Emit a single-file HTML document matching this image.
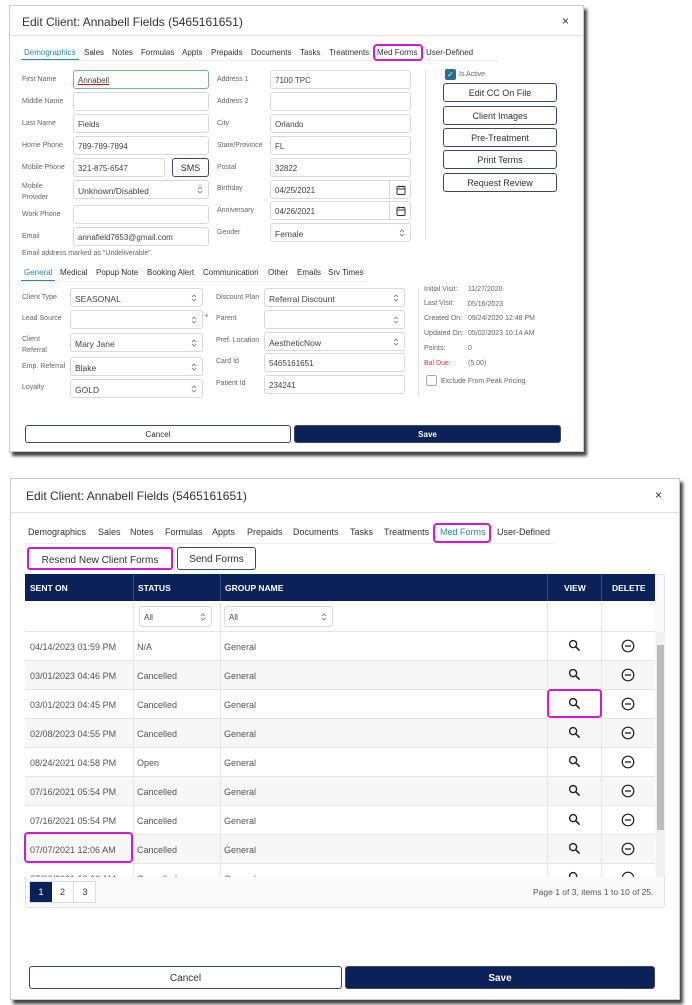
<!DOCTYPE html>
<html><head><meta charset="utf-8"><style>
*{box-sizing:border-box;margin:0;padding:0}
body{width:692px;height:1005px;background:#fff;position:relative;overflow:hidden;font-family:"Liberation Sans",sans-serif;color:#333}
.a{position:absolute;white-space:nowrap}
.m{position:absolute;background:#fff;border:1px solid #ccc;box-shadow:3px 4px 3px #444}
.lbl{position:absolute;font-size:7px;color:#666}
.inp{position:absolute;border:1px solid #d9d9d9;border-radius:3px;height:19px;font-size:8px;padding:5px 4px;color:#444;background:#fff}
.sel:after{content:"";position:absolute;right:6px;top:5px;width:4px;height:7px;background:linear-gradient(#fff,#fff);border:none}
.btn{position:absolute;border:1px solid #3c4a6a;border-radius:3px;font-size:9px;text-align:center;color:#333;background:#fff}
.mg{position:absolute;border:2px solid #d21ad0;border-radius:4px}
.t1{position:absolute;top:48px;font-size:8px;color:#333;white-space:nowrap}
.t2{position:absolute;top:268px;font-size:8px;color:#333;white-space:nowrap}
.t3{position:absolute;top:527px;font-size:9px;color:#333;white-space:nowrap}
.row{position:absolute;left:25px;width:630px;height:29px;border-bottom:1px solid #e6e6e6;font-size:9px;color:#555}
.row span{position:absolute;top:10px}
.cell{position:absolute;top:0;height:100%;border-left:1px solid #e6e6e6}
.ic{position:absolute;top:7px}
.ud{position:absolute;right:5px;top:4px}
</style></head><body>
<svg width="0" height="0" style="position:absolute"><defs>
<symbol id="q" viewBox="0 0 14 14"><circle cx="5.5" cy="5.5" r="3.8" fill="none" stroke="#222" stroke-width="1.5"/><path d="M8.3 8.3L12 12" stroke="#222" stroke-width="1.7" stroke-linecap="round"/></symbol>
<symbol id="d" viewBox="0 0 14 14"><circle cx="7" cy="7" r="5.8" fill="none" stroke="#222" stroke-width="1.2"/><path d="M4 7h6" stroke="#222" stroke-width="1.3"/></symbol>
<symbol id="ud" viewBox="0 0 6 10"><path d="M1 4L3 2L5 4M1 6L3 8L5 6" fill="none" stroke="#888" stroke-width="0.9"/></symbol>
<symbol id="cal" viewBox="0 0 12 12"><rect x="2" y="2.5" width="8" height="8" rx="1" fill="none" stroke="#333" stroke-width="1"/><path d="M2 5h8M4 1.5v2M8 1.5v2" stroke="#333" stroke-width="1"/></symbol>
</defs></svg>

<!-- Modal 1 -->
<div class="m" style="left:9px;top:5px;width:575px;height:447px"></div>
<div class="a" style="left:22px;top:15px;font-size:12px;color:#333">Edit Client: Annabell Fields (5465161651)</div>
<div class="a" style="left:562px;top:14px;font-size:12px">×</div>
<div class="a" style="left:10px;top:35px;width:573px;border-top:1px solid #e2e2e2"></div>
<span class="t1" style="left:24px;color:#2a8ca8">Demographics</span><span class="t1" style="left:84px">Sales</span><span class="t1" style="left:112px">Notes</span><span class="t1" style="left:141px">Formulas</span><span class="t1" style="left:182px">Appts</span><span class="t1" style="left:211px">Prepaids</span><span class="t1" style="left:251px">Documents</span><span class="t1" style="left:300px">Tasks</span><span class="t1" style="left:329px">Treatments</span><span class="t1" style="left:377px">Med Forms</span><span class="t1" style="left:426px">User-Defined</span>
<div class="a" style="left:21px;top:60px;width:478px;border-top:1px solid #eee"></div>
<div class="a" style="left:21px;top:59px;width:58px;border-top:1px solid #2a8ca8"></div>
<div class="mg" style="left:373px;top:44px;width:50px;height:17px"></div>

<div class="lbl" style="left:22px;top:76px">First Name</div><div class="inp" style="left:73px;top:70px;width:136px;border-color:#7aa8c0"><u style="text-decoration-color:red">Annabell</u></div>
<div class="lbl" style="left:22px;top:98px">Middle Name</div><div class="inp" style="left:73px;top:92px;width:136px"></div>
<div class="lbl" style="left:22px;top:120px">Last Name</div><div class="inp" style="left:73px;top:114px;width:136px">Fields</div>
<div class="lbl" style="left:22px;top:142px">Home Phone</div><div class="inp" style="left:73px;top:136px;width:136px">789-789-7894</div>
<div class="lbl" style="left:22px;top:164px">Mobile Phone</div><div class="inp" style="left:73px;top:158px;width:92px">321-875-6547</div>
<div class="btn" style="left:172px;top:158px;width:37px;height:19px;padding-top:4px">SMS</div>
<div class="lbl" style="left:22px;top:181px;line-height:11px">Mobile<br>Provider</div><div class="inp" style="left:73px;top:180px;width:136px;font-size:8.5px">Unknown/Disabled<svg class="ud" width="6" height="10"><use href="#ud"/></svg></div>
<div class="lbl" style="left:22px;top:211px">Work Phone</div><div class="inp" style="left:73px;top:205px;width:136px"></div>
<div class="lbl" style="left:22px;top:233px">Email</div><div class="inp" style="left:73px;top:227px;width:136px">annafield7653@gmail.com</div>
<div class="lbl" style="left:22px;top:250px">Email address marked as "Undeliverable".</div>

<div class="lbl" style="left:217px;top:76px">Address 1</div><div class="inp" style="left:270px;top:70px;width:141px">7100 TPC</div>
<div class="lbl" style="left:217px;top:98px">Address 2</div><div class="inp" style="left:270px;top:92px;width:141px"></div>
<div class="lbl" style="left:217px;top:120px">City</div><div class="inp" style="left:270px;top:114px;width:141px">Orlando</div>
<div class="lbl" style="left:217px;top:142px">State/Province</div><div class="inp" style="left:270px;top:136px;width:141px">FL</div>
<div class="lbl" style="left:217px;top:164px">Postal</div><div class="inp" style="left:270px;top:158px;width:141px">32822</div>
<div class="lbl" style="left:217px;top:185px">Birthday</div><div class="inp" style="left:270px;top:180px;width:141px">04/25/2021</div><div class="a" style="left:389px;top:180px;width:22px;height:19px;border-left:1px solid #d9d9d9;padding:3px 5px"><svg width="12" height="12"><use href="#cal"/></svg></div>
<div class="lbl" style="left:217px;top:207px">Anniversary</div><div class="inp" style="left:270px;top:201px;width:141px">04/26/2021</div><div class="a" style="left:389px;top:201px;width:22px;height:19px;border-left:1px solid #d9d9d9;padding:3px 5px"><svg width="12" height="12"><use href="#cal"/></svg></div>
<div class="lbl" style="left:217px;top:229px">Gender</div><div class="inp" style="left:270px;top:223px;width:141px;font-size:8.5px">Female<svg class="ud" width="6" height="10"><use href="#ud"/></svg></div>
<div class="a" style="left:425px;top:70px;height:170px;border-left:1px solid #e2e2e2"></div>

<div class="a" style="left:445px;top:69px;width:11px;height:11px;background:#2a6e8c;border-radius:2px;color:#fff;font-size:8px;text-align:center;line-height:11px">✓</div>
<div class="lbl" style="left:459px;top:71px">Is Active</div>
<div class="btn" style="left:443px;top:83px;width:114px;height:19px;padding-top:4px">Edit CC On File</div>
<div class="btn" style="left:443px;top:106px;width:114px;height:19px;padding-top:4px">Client Images</div>
<div class="btn" style="left:443px;top:128px;width:114px;height:19px;padding-top:4px">Pre-Treatment</div>
<div class="btn" style="left:443px;top:150px;width:114px;height:19px;padding-top:4px">Print Terms</div>
<div class="btn" style="left:443px;top:173px;width:114px;height:19px;padding-top:4px">Request Review</div>

<span class="t2" style="left:24px;color:#2a8ca8">General</span><span class="t2" style="left:60px">Medical</span><span class="t2" style="left:96px">Popup Note</span><span class="t2" style="left:147px">Booking Alert</span><span class="t2" style="left:203px">Communication</span><span class="t2" style="left:268px">Other</span><span class="t2" style="left:297px">Emails</span><span class="t2" style="left:328px">Srv Times</span>
<div class="a" style="left:21px;top:281px;width:346px;border-top:1px solid #eee"></div>
<div class="a" style="left:21px;top:280px;width:34px;border-top:1px solid #2a8ca8"></div>

<div class="lbl" style="left:22px;top:294px">Client Type</div><div class="inp" style="left:70px;top:288px;width:133px;font-size:8.5px">SEASONAL<svg class="ud" width="6" height="10"><use href="#ud"/></svg></div>
<div class="lbl" style="left:22px;top:315px">Lead Source</div><div class="inp" style="left:70px;top:310px;width:133px"><svg class="ud" width="6" height="10"><use href="#ud"/></svg></div>
<div class="lbl" style="left:22px;top:334px;line-height:11px">Client<br>Referral</div><div class="inp" style="left:70px;top:333px;width:133px;font-size:8.5px">Mary Jane<svg class="ud" width="6" height="10"><use href="#ud"/></svg></div>
<div class="lbl" style="left:22px;top:363px">Emp. Referral</div><div class="inp" style="left:70px;top:357px;width:133px;font-size:8.5px">Blake<svg class="ud" width="6" height="10"><use href="#ud"/></svg></div>
<div class="lbl" style="left:22px;top:384px">Loyalty</div><div class="inp" style="left:70px;top:379px;width:133px;font-size:8.5px">GOLD<svg class="ud" width="6" height="10"><use href="#ud"/></svg></div>
<div class="a" style="left:205px;top:313px;color:#d33;font-size:8px">*</div>
<div class="lbl" style="left:216px;top:294px">Discount Plan</div><div class="inp" style="left:264px;top:288px;width:141px;font-size:8.5px">Referral Discount<svg class="ud" width="6" height="10"><use href="#ud"/></svg></div>
<div class="lbl" style="left:216px;top:315px">Parent</div><div class="inp" style="left:264px;top:310px;width:141px"><svg class="ud" width="6" height="10"><use href="#ud"/></svg></div>
<div class="lbl" style="left:216px;top:337px">Pref. Location</div><div class="inp" style="left:264px;top:332px;width:141px;font-size:8.5px">AestheticNow<svg class="ud" width="6" height="10"><use href="#ud"/></svg></div>
<div class="lbl" style="left:216px;top:358px">Card Id</div><div class="inp" style="left:264px;top:353px;width:141px">5465161651</div>
<div class="lbl" style="left:216px;top:380px">Patient Id</div><div class="inp" style="left:264px;top:375px;width:141px">234241</div>
<div class="a" style="left:418px;top:288px;height:108px;border-left:1px solid #e2e2e2"></div>
<div class="lbl" style="left:424px;top:286px">Initial Visit:</div><div class="lbl" style="left:468px;top:286px">11/27/2020</div>
<div class="lbl" style="left:424px;top:300px">Last Visit:</div><div class="lbl" style="left:468px;top:301px">05/16/2023</div>
<div class="lbl" style="left:424px;top:315px">Created On:</div><div class="lbl" style="left:468px;top:315px">09/24/2020 12:48 PM</div>
<div class="lbl" style="left:424px;top:330px">Updated On:</div><div class="lbl" style="left:468px;top:330px">05/02/2023 10:14 AM</div>
<div class="lbl" style="left:424px;top:345px">Points:</div><div class="lbl" style="left:468px;top:345px">0</div>
<div class="lbl" style="left:424px;top:360px;color:#d33">Bal Due:</div><div class="lbl" style="left:468px;top:360px">(5.00)</div>
<div class="a" style="left:426px;top:375px;width:11px;height:11px;border:1px solid #aaa;border-radius:2px"></div>
<div class="lbl" style="left:441px;top:378px">Exclude From Peak Pricing</div>
<div class="btn" style="left:25px;top:425px;width:266px;height:18px;font-size:8px;padding-top:4px">Cancel</div>
<div class="btn" style="left:294px;top:425px;width:267px;height:18px;font-size:8px;padding-top:4px;background:#0b2259;color:#fff;font-weight:bold">Save</div>

<!-- Modal 2 -->
<div class="m" style="left:10px;top:478px;width:670px;height:522px"></div>
<div class="a" style="left:26px;top:489px;font-size:12px">Edit Client: Annabell Fields (5465161651)</div>
<div class="a" style="left:655px;top:488px;font-size:12px">×</div>
<div class="a" style="left:11px;top:512px;width:668px;border-top:1px solid #e2e2e2"></div>
<span class="t3" style="left:28px">Demographics</span><span class="t3" style="left:98px">Sales</span><span class="t3" style="left:130px">Notes</span><span class="t3" style="left:165px">Formulas</span><span class="t3" style="left:212px">Appts</span><span class="t3" style="left:247px">Prepaids</span><span class="t3" style="left:293px">Documents</span><span class="t3" style="left:350px">Tasks</span><span class="t3" style="left:384px">Treatments</span><span class="t3" style="left:440px;color:#2a8ca8">Med Forms</span><span class="t3" style="left:497px">User-Defined</span>
<div class="a" style="left:24px;top:543px;width:530px;border-top:1px solid #eee"></div>
<div class="a" style="left:438px;top:542px;width:48px;border-top:1px solid #2a8ca8"></div>
<div class="mg" style="left:433px;top:523px;width:58px;height:20px"></div>
<div class="btn" style="left:27px;top:547px;width:146px;height:23px;padding-top:6px;font-size:10px;border:2px solid #d21ad0">Resend New Client Forms</div>
<div class="btn" style="left:177px;top:547px;width:79px;height:23px;padding-top:6px;font-size:10px">Send Forms</div>

<div class="a" style="left:25px;top:574px;width:640px;height:334px;border:1px solid #e2e2e2;border-radius:3px;background:#fafafa"></div>
<div class="a" style="left:25px;top:574px;width:630px;height:27px;background:#0b2259;color:#fff;font-size:8.5px;font-weight:bold">
<span class="a" style="left:5px;top:9px">SENT ON</span><span class="a" style="left:113px;top:9px">STATUS</span><span class="a" style="left:200px;top:9px">GROUP NAME</span><span class="a" style="left:539px;top:9px">VIEW</span><span class="a" style="left:587px;top:9px">DELETE</span>
<div class="cell" style="left:108px;border-color:#3a4a7a"></div><div class="cell" style="left:195px;border-color:#3a4a7a"></div><div class="cell" style="left:522px;border-color:#3a4a7a"></div><div class="cell" style="left:576px;border-color:#3a4a7a"></div></div>
<div class="row" style="top:601px;height:31px;background:#fff">
<div class="cell" style="left:108px"></div><div class="cell" style="left:195px"></div><div class="cell" style="left:522px"></div><div class="cell" style="left:576px"></div>
<div class="inp" style="left:114px;top:5px;width:73px;height:21px;padding-top:6px">All<svg class="ud" style="top:5px" width="6" height="10"><use href="#ud"/></svg></div>
<div class="inp" style="left:199px;top:5px;width:109px;height:21px;padding-top:6px">All<svg class="ud" style="top:5px" width="6" height="10"><use href="#ud"/></svg></div></div>

<div style="position:absolute;left:0;top:632px;width:692px;height:245px;overflow:hidden">
<div class="row" style="top:0;background:#fff"><span style="left:5px">04/14/2023 01:59 PM</span><span style="left:112px">N/A</span><span style="left:199px">General</span><div class="cell" style="left:108px"></div><div class="cell" style="left:195px"></div><div class="cell" style="left:522px"></div><div class="cell" style="left:576px"></div><svg class="ic" style="left:543px" width="13" height="13"><use href="#q"/></svg><svg class="ic" style="left:596px" width="14" height="14"><use href="#d"/></svg></div>
<div class="row" style="top:29px;background:#f7f7f7"><span style="left:5px">03/01/2023 04:46 PM</span><span style="left:112px">Cancelled</span><span style="left:199px">General</span><div class="cell" style="left:108px"></div><div class="cell" style="left:195px"></div><div class="cell" style="left:522px"></div><div class="cell" style="left:576px"></div><svg class="ic" style="left:543px" width="13" height="13"><use href="#q"/></svg><svg class="ic" style="left:596px" width="14" height="14"><use href="#d"/></svg></div>
<div class="row" style="top:58px;background:#fff"><span style="left:5px">03/01/2023 04:45 PM</span><span style="left:112px">Cancelled</span><span style="left:199px">General</span><div class="cell" style="left:108px"></div><div class="cell" style="left:195px"></div><div class="cell" style="left:522px"></div><div class="cell" style="left:576px"></div><svg class="ic" style="left:543px" width="13" height="13"><use href="#q"/></svg><svg class="ic" style="left:596px" width="14" height="14"><use href="#d"/></svg></div>
<div class="row" style="top:87px;background:#f7f7f7"><span style="left:5px">02/08/2023 04:55 PM</span><span style="left:112px">Cancelled</span><span style="left:199px">General</span><div class="cell" style="left:108px"></div><div class="cell" style="left:195px"></div><div class="cell" style="left:522px"></div><div class="cell" style="left:576px"></div><svg class="ic" style="left:543px" width="13" height="13"><use href="#q"/></svg><svg class="ic" style="left:596px" width="14" height="14"><use href="#d"/></svg></div>
<div class="row" style="top:116px;background:#fff"><span style="left:5px">08/24/2021 04:58 PM</span><span style="left:112px">Open</span><span style="left:199px">General</span><div class="cell" style="left:108px"></div><div class="cell" style="left:195px"></div><div class="cell" style="left:522px"></div><div class="cell" style="left:576px"></div><svg class="ic" style="left:543px" width="13" height="13"><use href="#q"/></svg><svg class="ic" style="left:596px" width="14" height="14"><use href="#d"/></svg></div>
<div class="row" style="top:145px;background:#f7f7f7"><span style="left:5px">07/16/2021 05:54 PM</span><span style="left:112px">Cancelled</span><span style="left:199px">General</span><div class="cell" style="left:108px"></div><div class="cell" style="left:195px"></div><div class="cell" style="left:522px"></div><div class="cell" style="left:576px"></div><svg class="ic" style="left:543px" width="13" height="13"><use href="#q"/></svg><svg class="ic" style="left:596px" width="14" height="14"><use href="#d"/></svg></div>
<div class="row" style="top:174px;background:#fff"><span style="left:5px">07/16/2021 05:54 PM</span><span style="left:112px">Cancelled</span><span style="left:199px">General</span><div class="cell" style="left:108px"></div><div class="cell" style="left:195px"></div><div class="cell" style="left:522px"></div><div class="cell" style="left:576px"></div><svg class="ic" style="left:543px" width="13" height="13"><use href="#q"/></svg><svg class="ic" style="left:596px" width="14" height="14"><use href="#d"/></svg></div>
<div class="row" style="top:203px;background:#f7f7f7"><span style="left:5px">07/07/2021 12:06 AM</span><span style="left:112px">Cancelled</span><span style="left:199px">General</span><div class="cell" style="left:108px"></div><div class="cell" style="left:195px"></div><div class="cell" style="left:522px"></div><div class="cell" style="left:576px"></div><svg class="ic" style="left:543px" width="13" height="13"><use href="#q"/></svg><svg class="ic" style="left:596px" width="14" height="14"><use href="#d"/></svg></div>
<div class="row" style="top:232px;background:#fff"><span style="left:5px">07/06/2021 12:06 AM</span><span style="left:112px">Cancelled</span><span style="left:199px">General</span><div class="cell" style="left:108px"></div><div class="cell" style="left:195px"></div><div class="cell" style="left:522px"></div><div class="cell" style="left:576px"></div><svg class="ic" style="left:543px" width="13" height="13"><use href="#q"/></svg><svg class="ic" style="left:596px" width="14" height="14"><use href="#d"/></svg></div>
</div>
<div class="a" style="left:656px;top:632px;width:9px;height:245px;background:#f0f0f0"></div>
<div class="a" style="left:657px;top:645px;width:7px;height:185px;background:#bcbcbc"></div>

<div class="mg" style="left:547px;top:689px;width:55px;height:29px"></div>
<div class="mg" style="left:24px;top:832px;width:109px;height:31px"></div>

<div class="a" style="left:29px;top:881px;width:67px;height:22px;border:1px solid #ddd;background:#fff;font-size:9px">
<span class="a" style="left:0;top:0;width:22px;height:20px;background:#0b2259;color:#fff;text-align:center;padding-top:5px">1</span>
<span class="a" style="left:22px;top:0;width:22px;height:20px;text-align:center;padding-top:5px;border-right:1px solid #ddd">2</span>
<span class="a" style="left:44px;top:0;width:22px;height:20px;text-align:center;padding-top:5px">3</span></div>
<div class="a" style="left:533px;top:887px;font-size:8.5px;color:#555">Page 1 of 3, items 1 to 10 of 25.</div>

<div class="btn" style="left:29px;top:966px;width:313px;height:23px;padding-top:6px;font-size:10px">Cancel</div>
<div class="btn" style="left:345px;top:966px;width:310px;height:23px;padding-top:6px;font-size:10px;background:#0b2259;color:#fff;font-weight:bold">Save</div>
</body></html>
